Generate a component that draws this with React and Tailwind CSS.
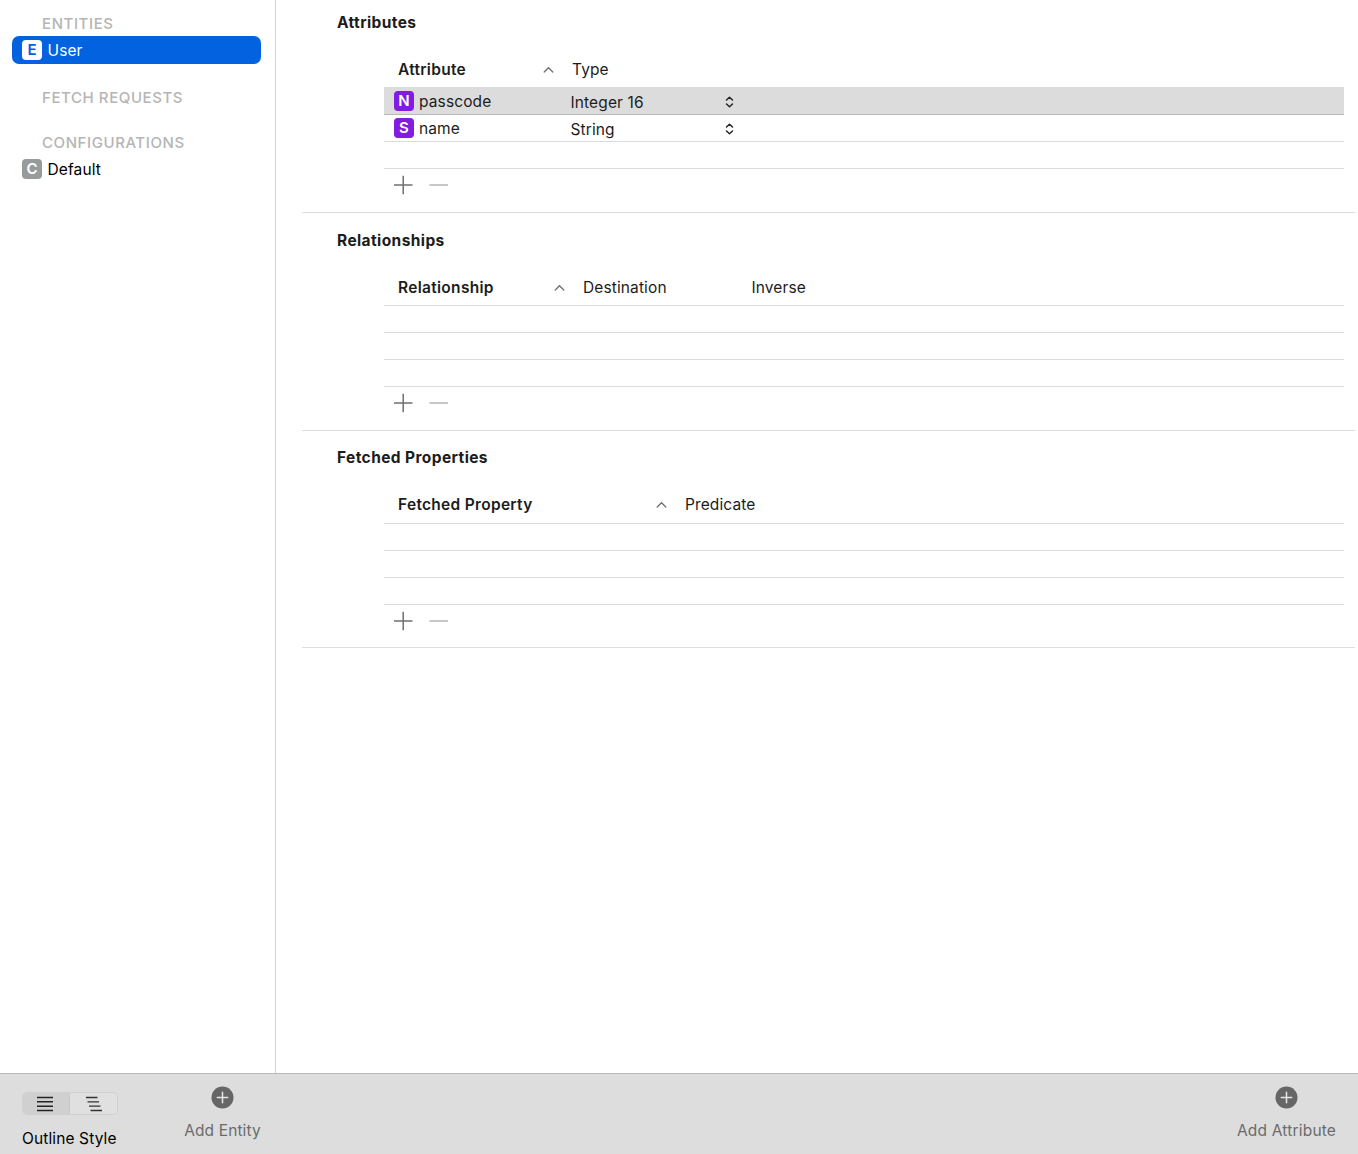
import React from "react";

const sections = [
  {
    title: "Attributes",
    columns: [
      { label: "Attribute", width: "w-[174px]", sorted: true },
      { label: "Type", width: "w-[180px]" },
    ],
    rows: [
      { badge: "N", name: "passcode", type: "Integer 16", selected: true },
      { badge: "S", name: "name", type: "String" },
      null,
    ],
    titlePad: "pt-0.5",
    headerPad: "pt-[3px]",
    footer: "h-[43px]",
  },
  {
    title: "Relationships",
    columns: [
      { label: "Relationship", width: "w-[185px]", sorted: true },
      { label: "Destination", width: "w-[168.5px]" },
      { label: "Inverse", width: "w-[180px]" },
    ],
    rows: [null, null, null],
    titlePad: "pt-0.5",
    headerPad: "pt-[3px]",
    footer: "h-[43px]",
  },
  {
    title: "Fetched Properties",
    columns: [
      { label: "Fetched Property", width: "w-[287px]", sorted: true },
      { label: "Predicate", width: "w-[180px]" },
    ],
    rows: [null, null, null],
    titlePad: "pt-0",
    headerPad: "pt-px",
    footer: "h-[42px]",
  },
];

export default function App() {
  return (
    <div className="flex h-[1154px] w-[1358px] flex-col overflow-hidden bg-white font-['Inter',sans-serif] text-[15.5px] leading-5 tracking-[0.12px] text-[#1c1c1c]">
      <div className="flex min-h-0 flex-1">
        <Sidebar />
        <main className="-mt-[5px] flex-1 pl-[26px] pr-[3px]">
          {sections.map((section) => (
            <Section key={section.title} section={section} />
          ))}
        </main>
      </div>
      <BottomBar />
    </div>
  );
}

function Sidebar() {
  return (
    <aside className="w-[276px] border-r border-[#d4d4d4] pl-3 pr-[14px] pt-[14px]">
      <SidebarHeading>ENTITIES</SidebarHeading>
      <div className="mt-0.5 flex h-7 items-center rounded-[7px] bg-[#0262e0] pl-[10px] text-white">
        <Badge className="bg-white text-[#0262e0]">E</Badge>
        <span className="ml-[5.5px] pt-0.5">User</span>
      </div>
      <div className="mt-[23.5px]">
        <SidebarHeading>FETCH REQUESTS</SidebarHeading>
      </div>
      <div className="mt-[25.5px]">
        <SidebarHeading>CONFIGURATIONS</SidebarHeading>
      </div>
      <div className="mt-0.5 flex h-7 items-center pl-[10px] text-black">
        <Badge className="bg-[#979b9c] text-white">C</Badge>
        <span className="ml-[5.5px] pt-0.5">Default</span>
      </div>
    </aside>
  );
}

function SidebarHeading({ children }) {
  return (
    <h3 className="h-5 pl-[30px] text-[15px] font-medium leading-5 tracking-[0.58px] text-[#b5b5b5]">
      {children}
    </h3>
  );
}

function Badge({ className, children }) {
  return (
    <span
      className={`flex size-5 justify-center rounded-[4px] text-[15px] font-semibold leading-5 tracking-normal ${className}`}
    >
      {children}
    </span>
  );
}

function Section({ section }) {
  return (
    <section className="border-b border-[#dedede]">
      <h2 className={`flex h-[54px] items-center pl-[35px] font-bold tracking-[0.4px] ${section.titlePad}`}>
        {section.title}
      </h2>
      <div className="ml-[82px] mr-[11px]">
        <div className={`flex h-[39px] items-center border-b border-[#dcdcdc] pl-[14px] ${section.headerPad}`}>
          {section.columns.map((column) => (
            <div
              key={column.label}
              className={`flex items-center justify-between ${column.width} ${
                column.sorted ? "pr-[18px] font-semibold tracking-[0.3px]" : ""
              }`}
            >
              {column.label}
              {column.sorted && <SortCaret />}
            </div>
          ))}
        </div>
        {section.rows.map((row, i) => (
          <Row key={i} row={row} />
        ))}
      </div>
      <div className={`ml-[91px] flex gap-4 pt-[6px] ${section.footer}`}>
        <svg width="20" height="20" viewBox="0 0 20 20" stroke="#707070" strokeWidth="1.5">
          <path d="M1 10H19.5M10.2 0.8V19.3" />
        </svg>
        <svg width="20" height="20" viewBox="0 0 20 20" stroke="#b5b5b5" strokeWidth="1.5">
          <path d="M0.5 10H19" />
        </svg>
      </div>
    </section>
  );
}

function Row({ row }) {
  if (!row) return <div className="h-[27px] border-b border-[#dcdcdc]" />;

  return (
    <div
      className={`flex h-[27px] items-center border-b pl-[10px] ${
        row.selected ? "border-[#b9b9b9] bg-[#dcdcdc]" : "border-[#dcdcdc]"
      }`}
    >
      <Badge className="bg-[#811ce0] text-white">{row.badge}</Badge>
      <span className="ml-[5px] w-[151.5px] pt-0.5">{row.name}</span>
      <span className="w-[154.5px] pt-[3px]">{row.type}</span>
      <svg className="mt-px" width="9" height="12" viewBox="0 0 9 12" fill="none" stroke="#222" strokeWidth="1.5" strokeLinecap="round" strokeLinejoin="round">
        <path d="M1.5 4L4.5 1.3L7.5 4M1.5 8L4.5 10.7L7.5 8" />
      </svg>
    </div>
  );
}

function SortCaret() {
  return (
    <svg width="11" height="8" viewBox="0 0 11 8" fill="none" stroke="#707070" strokeWidth="1.3" strokeLinecap="round">
      <path d="M1.2 6L5.5 1.7L9.8 6" />
    </svg>
  );
}

function BottomBar() {
  return (
    <footer className="flex h-[81px] border-t border-[#b8b8b8] bg-[#dddddd]">
      <div className="ml-[22px] flex w-24 flex-col pt-[18px]">
        <div className="flex h-[23px] overflow-hidden rounded-[5px] border border-[#d0d0d0]">
          <div className="flex w-[47px] items-center justify-center border-r border-[#c8c8c8] bg-[#d0d0d0] pr-0.5">
            <svg width="16" height="16" viewBox="0 0 16 16" stroke="#222" strokeWidth="1.4">
              <path d="M0 1.5H16M0 5.8H16M0 10.2H16M0 14.5H16" />
            </svg>
          </div>
          <div className="flex flex-1 items-center justify-center bg-[#e0e0e0]">
            <svg width="16" height="16" viewBox="0 0 16 16" stroke="#333" strokeWidth="1.3">
              <path d="M0 1.5H11.5M1.5 5.8H13M3 10.2H14.5M4.5 14.5H16" />
            </svg>
          </div>
        </div>
        <span className="mt-[14px] whitespace-nowrap text-black">Outline Style</span>
      </div>
      <AddButton className="ml-[66px] w-[77px]">Add Entity</AddButton>
      <AddButton className="ml-auto mr-[21px] w-[101px] tracking-[0.2px]">Add Attribute</AddButton>
    </footer>
  );
}

function AddButton({ className, children }) {
  return (
    <button className={`flex flex-col items-center whitespace-nowrap pt-[12px] text-[#6b6b6b] ${className}`}>
      <svg width="23" height="23" viewBox="0 0 23 23">
        <circle cx="11.5" cy="11.5" r="11" fill="#666" />
        <path d="M6.3 11.5H16.7M11.5 6.3V16.7" stroke="#e6e6e6" strokeWidth="1.5" strokeLinecap="round" />
      </svg>
      <span className="mt-3">{children}</span>
    </button>
  );
}
